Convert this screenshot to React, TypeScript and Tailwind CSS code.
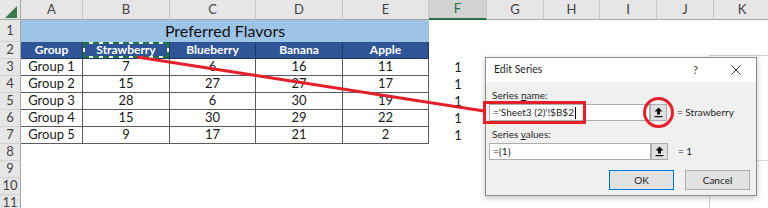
import React from 'react';

const letters = ['A', 'B', 'C', 'D', 'E', 'F', 'G', 'H', 'I', 'J', 'K'];
const widths = ['w-[62px]', 'w-[87px]', 'w-[86px]', 'w-[87px]', 'w-[86px]', 'w-[58px]', 'w-[57px]', 'w-[56px]', 'w-[57px]', 'w-[57px]', 'w-[57px]'];
const headers = ['Group', 'Strawberry', 'Blueberry', 'Banana', 'Apple'];

const data: (string | number)[][] = [
  ['Group 1', 7, 6, 16, 11],
  ['Group 2', 15, 27, 27, 17],
  ['Group 3', 28, 6, 30, 19],
  ['Group 4', 15, 30, 29, 22],
  ['Group 5', 9, 17, 21, 2],
];

function RowHead({ n, h }: { n: number | string; h: string }) {
  return (
    <div className={`w-[21px] ${h} shrink-0 bg-[#e6e6e6] border-r border-b border-r-[#a6a6a6] border-b-[#d2d2d2] flex items-center justify-center text-[13px] text-[#444]`}>
      {n}
    </div>
  );
}

function RefIcon() {
  return (
    <svg width="9" height="11" viewBox="0 0 9 11">
      <path d="M4.5 0.5 L8.5 4.5 L6 4.5 L6 7.5 L3 7.5 L3 4.5 L0.5 4.5 Z" fill="#111" />
      <rect x="0.5" y="9" width="8" height="1.2" fill="#111" />
    </svg>
  );
}

export default function App() {
  return (
    <div className="relative w-[768px] h-[208px] overflow-hidden bg-white font-['Lato','Liberation_Sans',sans-serif]">
      {/* column header row */}
      <div className="flex h-[20px]">
        <div className="w-[21px] shrink-0 bg-[#e6e6e6] border-r border-b border-[#a6a6a6] relative">
          <svg className="absolute left-[5px] top-[6px]" width="12" height="12" viewBox="0 0 12 12">
            <path d="M12 0 L12 12 L0 12 Z" fill="#3c7a4b" />
          </svg>
        </div>
        {letters.map((l, i) => (
          <div
            key={l}
            className={`${widths[i]} shrink-0 flex items-center justify-center text-[13px] border-r border-r-[#c8c8c8] ${
              l === 'F'
                ? 'bg-[#d2d2d2] text-[#217346] border-b-2 border-b-[#217346]'
                : 'bg-[#e6e6e6] text-[#444] border-b border-b-[#a6a6a6]'
            }`}
          >
            {l}
          </div>
        ))}
      </div>

      {/* row 1 - title */}
      <div className="flex h-[22px]">
        <RowHead n={1} h="h-[22px]" />
        <div className="w-[408px] shrink-0 bg-[#9dc3e6] flex items-center justify-center text-[16px] text-[#111]">
          Preferred Flavors
        </div>
      </div>

      {/* row 2 - headers */}
      <div className="flex h-[17px]">
        <RowHead n={2} h="h-[17px]" />
        {headers.map((t, i) => (
          <div
            key={t}
            className={`${widths[i]} shrink-0 relative bg-[#2f5597] border-r border-b border-[#1f3864] flex items-center justify-center text-[12px] font-bold text-white`}
          >
            {t}
            {i === 1 && (
              <>
                <div className="absolute inset-0 border-2 border-[#e8f3ec]" />
                <div className="absolute inset-0 border-2 border-dashed border-[#217346]" />
              </>
            )}
          </div>
        ))}
      </div>

      {/* data rows */}
      {data.map((row, r) => (
        <div key={r} className="flex h-[17px]">
          <RowHead n={r + 3} h="h-[17px]" />
          {row.map((v, i) => (
            <div
              key={i}
              className={`${widths[i]} shrink-0 border-r border-b border-[#5c5c5c] flex items-center justify-center text-[13px] text-[#1a1a1a]`}
            >
              {v}
            </div>
          ))}
          <div className="w-[58px] shrink-0 flex items-center justify-center text-[13px] text-[#1a1a1a]">1</div>
        </div>
      ))}

      {[8, 9, 10, 11].map((n) => (
        <div key={n} className="flex h-[17px]">
          <RowHead n={n} h="h-[17px]" />
        </div>
      ))}

      {/* chart object behind the dialog */}
      <div className="absolute left-[709px] top-[55px] w-[70px] h-[170px] border-l border-t border-[#d0d0d0]" />
      <div className="absolute left-[709px] top-[160px] w-[70px] border-t border-[#d9d9d9]" />

      {/* Edit Series dialog */}
      <div className="absolute left-[485px] top-[57px] w-[272px] h-[139px] bg-[#f0f0f0] border border-[#8c8c8c] shadow-[0_2px_6px_rgba(0,0,0,0.25)] flex flex-col font-['Lato','Liberation_Sans',sans-serif] text-[10px] text-[#1e1e1e]">
        <div className="h-[24px] shrink-0 bg-white flex items-center pl-[8px] pr-[15px]">
          <span className="text-[10.5px]">Edit Series</span>
          <span className="ml-auto mr-[33px] text-[11px] text-[#444]">?</span>
          <svg width="10" height="10" viewBox="0 0 10 10">
            <path d="M0.5 0.5 L9.5 9.5 M9.5 0.5 L0.5 9.5" stroke="#333" strokeWidth="1" />
          </svg>
        </div>

        <div className="h-[22px] flex items-end pl-[6px] pb-[4px] leading-none">
          <span>
            Series <span className="underline">n</span>ame:
          </span>
        </div>
        <div className="flex items-center h-[17px] pl-[3px]">
          <div className="w-[161px] h-[17px] bg-white border border-[#acacac] flex items-center pl-[3px]">
            ='Sheet3 (2)'!$B$2
            <span className="w-px h-[12px] bg-black ml-px" />
          </div>
          <div className="w-[17px] h-[17px] bg-[#e1e1e1] border border-[#acacac] flex items-center justify-center">
            <RefIcon />
          </div>
          <span className="ml-[10px]">= Strawberry</span>
        </div>

        <div className="h-[22px] flex items-end pl-[6px] pb-[4px] leading-none">
          <span>
            Series <span className="underline">v</span>alues:
          </span>
        </div>
        <div className="flex items-center h-[17px] pl-[3px]">
          <div className="w-[162px] h-[17px] bg-white border border-[#acacac] flex items-center pl-[3px]">={'{'}1{'}'}</div>
          <div className="w-[17px] h-[17px] bg-[#e1e1e1] border border-[#acacac] flex items-center justify-center">
            <RefIcon />
          </div>
          <span className="ml-[10px]">= 1</span>
        </div>

        <div className="flex justify-end gap-[11px] pr-[6px] mt-[10px]">
          <div className="w-[65px] h-[20px] bg-[#e1e1e1] border border-[#0078d7] flex items-center justify-center">OK</div>
          <div className="w-[65px] h-[20px] bg-[#e1e1e1] border border-[#adadad] flex items-center justify-center">Cancel</div>
        </div>
      </div>

      {/* red annotations */}
      <svg className="absolute left-0 top-0 pointer-events-none" width="768" height="208" viewBox="0 0 768 208">
        <line x1="137" y1="57" x2="484" y2="111" stroke="#e4202b" strokeWidth="3" />
        <rect x="484.5" y="102.5" width="100" height="20" fill="none" stroke="#e4202b" strokeWidth="3" />
        <circle cx="658.5" cy="112.5" r="14" fill="none" stroke="#e4202b" strokeWidth="3" />
      </svg>
    </div>
  );
}
